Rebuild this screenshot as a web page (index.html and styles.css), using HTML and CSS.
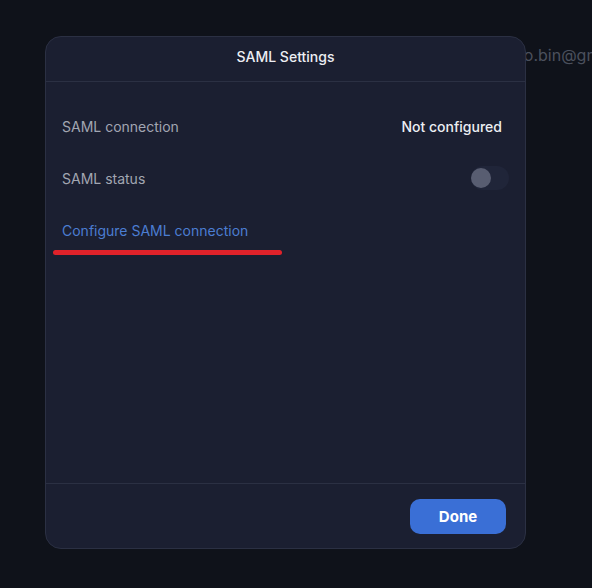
FILE: index.html
```html
<!DOCTYPE html>
<html>
<head>
<meta charset="utf-8">
<link rel="stylesheet" href="styles.css">
</head>
<body>
<div class="page-email">bo.bin@gm</div>
<div class="modal">
  <div class="modal-header">SAML Settings</div>
  <div class="modal-body">
    <div class="row">
      <span class="label">SAML connection</span>
      <span class="value">Not configured</span>
    </div>
    <div class="row">
      <span class="label">SAML status</span>
      <span class="toggle"><span class="knob"></span></span>
    </div>
    <div class="row">
      <a class="link">Configure SAML connection</a>
    </div>
  </div>
  <div class="modal-footer">
    <button class="done">Done</button>
  </div>
</div>
<div class="annotation"></div>
</body>
</html>
```
FILE: styles.css
```css
html, body {
  margin: 0;
  padding: 0;
  width: 592px;
  height: 588px;
  overflow: hidden;
  background: #0f121a;
  font-family: Inter, "Liberation Sans", sans-serif;
}
.page-email {
  position: absolute;
  left: 514px;
  top: 45px;
  font-size: 16px;
  color: #4b505d;
  white-space: nowrap;
}
.modal {
  position: absolute;
  left: 45px;
  top: 36px;
  width: 479px;
  height: 511px;
  background: #1b1f31;
  border: 1px solid #2b3043;
  border-radius: 16px;
  display: flex;
  flex-direction: column;
}
.modal-header {
  height: 45px;
  box-sizing: border-box;
  padding-top: 11px;
  text-align: center;
  font-size: 14px;
  font-weight: 500;
  color: #eceef3;
  border-bottom: 1px solid #2b3043;
}
.modal-body {
  flex: 1;
  padding: 18px 16px 0 16px;
}
.row {
  height: 52px;
  display: flex;
  align-items: center;
  justify-content: space-between;
}
.label {
  font-size: 14px;
  color: #a2a6b2;
}
.value {
  font-size: 14px;
  font-weight: 500;
  color: #eceef3;
  margin-right: 7px;
}
.toggle {
  width: 38px;
  height: 24px;
  border-radius: 12px;
  background: #202539;
  display: flex;
  align-items: center;
}
.knob {
  width: 20px;
  height: 20px;
  border-radius: 50%;
  background: #585d71;
}
.link {
  font-size: 14px;
  color: #4b7dd2;
  cursor: pointer;
}
.modal-footer {
  height: 64px;
  border-top: 1px solid #2b3043;
  display: flex;
  align-items: center;
  justify-content: flex-end;
  padding-right: 19px;
}
.done {
  width: 96px;
  height: 35px;
  border: none;
  border-radius: 10px;
  background: #3a6fd6;
  color: #ffffff;
  font-family: Inter, "Liberation Sans", sans-serif;
  font-size: 15px;
  font-weight: 700;
}
.annotation {
  position: absolute;
  left: 53px;
  top: 250px;
  width: 229px;
  height: 5px;
  border-radius: 3px;
  background: #e0222a;
}
```
